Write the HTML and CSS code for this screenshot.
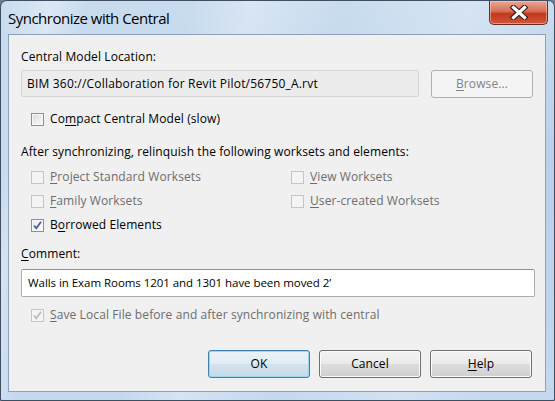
FILE: index.html
```html
<!DOCTYPE html>
<html>
<head>
<meta charset="utf-8">
<link rel="stylesheet" href="styles.css">
</head>
<body>
<div class="window">
  <div class="titlebar">
    <div class="title">Synchronize with Central</div>
    <div class="close">
      <svg width="22" height="15" viewBox="0 0 22 15">
        <path d="M5.5 2.5 L16.5 12.5 M16.5 2.5 L5.5 12.5" stroke="#3b1c1c" stroke-width="5.5" stroke-linecap="square" fill="none"/>
        <path d="M5.5 2.5 L16.5 12.5 M16.5 2.5 L5.5 12.5" stroke="#ffffff" stroke-width="3.2" stroke-linecap="square" fill="none"/>
      </svg>
    </div>
  </div>
  <div class="client">
    <div class="label first">Central Model Location:</div>
    <div class="location-row">
      <div class="readonly-box">BIM 360://Collaboration for Revit Pilot/56750_A.rvt</div>
      <div class="btn disabled"><span class="u">B</span>rowse...</div>
    </div>
    <div class="check compact"><span class="box"></span><span>Co<span class="u">m</span>pact Central Model (slow)</span></div>
    <div class="label after">After synchronizing, relinquish the following worksets and elements:</div>
    <div class="grid">
      <div class="check dis"><span class="box"></span><span><span class="u">P</span>roject Standard Worksets</span></div>
      <div class="check dis"><span class="box"></span><span><span class="u">V</span>iew Worksets</span></div>
      <div class="check dis"><span class="box"></span><span><span class="u">F</span>amily Worksets</span></div>
      <div class="check dis"><span class="box"></span><span><span class="u">U</span>ser-created Worksets</span></div>
      <div class="check"><span class="box checked"><svg width="11" height="11" viewBox="0 0 11 11"><path d="M2 5.5 L4.3 8.3 L9 1.8" stroke="#4b5fa0" stroke-width="1.8" fill="none"/></svg></span><span>B<span class="u">o</span>rrowed Elements</span></div>
    </div>
    <div class="label comment"><span class="u">C</span>omment:</div>
    <div class="input">Walls in Exam Rooms 1201 and 1301 have been moved 2’</div>
    <div class="check dis save"><span class="box checked"><svg width="11" height="11" viewBox="0 0 11 11"><path d="M2 5.5 L4.3 8.3 L9 1.8" stroke="#b9bcc2" stroke-width="1.8" fill="none"/></svg></span><span><span class="u">S</span>ave Local File before and after synchronizing with central</span></div>
    <div class="buttons">
      <div class="btn default">OK</div>
      <div class="btn">Cancel</div>
      <div class="btn"><span class="u">H</span>elp</div>
    </div>
  </div>
</div>
</body>
</html>
```

FILE: styles.css
```css
html, body {
  margin: 0;
  padding: 0;
  width: 555px;
  height: 401px;
  overflow: hidden;
  background: #6b7f94;
}
.window {
  box-sizing: border-box;
  width: 555px;
  height: 401px;
  border: 1px solid #3f4f61;
  border-radius: 7px 7px 2px 2px;
  background:
    linear-gradient(100deg, rgba(255,255,255,0) 0%, rgba(255,255,255,0.35) 8%, rgba(255,255,255,0) 14%, rgba(255,255,255,0) 30%, rgba(255,255,255,0.3) 40%, rgba(255,255,255,0) 55%, rgba(255,255,255,0.25) 75%, rgba(255,255,255,0) 90%),
    linear-gradient(#c9dcef, #b9d0e8 40%, #c4d8ee);
  display: flex;
  flex-direction: column;
  font-family: "Open Sans", "Noto Sans", sans-serif;
}
.titlebar {
  height: 33px;
  display: flex;
  justify-content: space-between;
  align-items: flex-start;
}
.title {
  font-size: 15px;
  color: #000;
  margin: 7px 0 0 7px;
  letter-spacing: -0.5px;
  line-height: 20px;
}
.close {
  width: 59px;
  height: 24px;
  margin-right: 6px;
  box-sizing: border-box;
  border: 1px solid #6b2a20;
  border-top: none;
  border-radius: 0 0 5px 5px;
  background: linear-gradient(#eaa894, #d66f55 45%, #c2381c 55%, #d0573a);
  display: flex;
  align-items: center;
  justify-content: center;
  box-shadow: inset 0 0 0 1px rgba(255,220,200,0.5);
}
.client {
  margin: 0 8px 0 7px;
  height: 358px;
  box-sizing: border-box;
  border: 1px solid #8da2b8;
  background: #f0f0f0;
  padding: 0 0 0 12px;
  font-size: 12px;
  color: #000;
  letter-spacing: 0.1px;
}
.u { text-decoration: underline; text-underline-offset: 2px; }
.label { line-height: 16px; }
.label.first { margin-top: 14px; }
.location-row {
  display: flex;
  gap: 12px;
  margin-top: 5px;
}
.readonly-box {
  width: 398px;
  height: 27px;
  box-sizing: border-box;
  border: 1px solid #d5d5d5;
  border-radius: 2px;
  background: #ececec;
  padding: 0 5px;
  line-height: 25px;
  letter-spacing: 0.2px;
}
.btn {
  width: 102px;
  height: 28px;
  box-sizing: border-box;
  border: 1px solid #707070;
  border-radius: 3px;
  background: linear-gradient(#f2f2f2, #ebebeb 49%, #dddddd 51%, #cfcfcf);
  box-shadow: inset 0 0 0 1px #fcfcfc;
  text-align: center;
  line-height: 26px;
  color: #000;
}
.btn.disabled {
  border-color: #adb2b5;
  background: #f4f4f4;
  color: #838383;
  box-shadow: none;
}
.btn.default {
  border-color: #3c7fb1;
  background: linear-gradient(#eaf2f7, #e1ecf3 49%, #d3e3ee 51%, #c6d9e6);
  box-shadow: inset 0 0 0 1px #9bd6f2;
}
.check {
  display: flex;
  align-items: center;
  height: 16px;
  line-height: 16px;
  gap: 6px;
  padding-left: 10px;
}
.box {
  width: 13px;
  height: 13px;
  box-sizing: border-box;
  border: 1px solid #8e8f8f;
  background: linear-gradient(135deg, #dcdcdc, #f4f4f4 80%);
  box-shadow: inset 0 0 0 1px #f7f7f7;
  display: flex;
  align-items: center;
  justify-content: center;
  flex: none;
}
.box.checked { background: linear-gradient(135deg, #e6ecf5, #f6f8fb 80%); }
.check.dis { color: #6d6d6d; }
.check.dis .box {
  border-color: #c6c6c6;
  background: #f4f4f4;
  box-shadow: none;
}
.compact { margin-top: 13px; }
.label.after { margin-top: 17px; }
.grid {
  margin-top: 9px;
  display: grid;
  grid-template-columns: 260px 1fr;
  row-gap: 8px;
}
.label.comment { margin-top: 13px; }
.input {
  margin-top: 7px;
  width: 514px;
  height: 28px;
  box-sizing: border-box;
  border: 1px solid #abadb3;
  border-top-color: #8e9196;
  background: #fff;
  border-radius: 2px;
  padding: 0 6px;
  line-height: 26px;
  font-size: 11.5px;
  letter-spacing: -0.05px;
}
.save { margin-top: 10px; }
.buttons {
  margin-top: 27px;
  display: flex;
  gap: 9px;
  justify-content: flex-end;
  padding-right: 13px;
}
```
